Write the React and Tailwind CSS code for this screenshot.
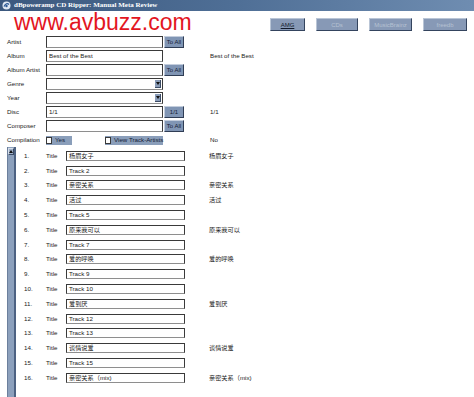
import React from 'react'

const ui = { fontFamily: '"Liberation Sans", Arial, "Noto Sans CJK SC", sans-serif' }

const tracks = [
  ['杨眉女子', '杨眉女子'],
  ['Track 2', ''],
  ['亲密关系', '亲密关系'],
  ['活过', '活过'],
  ['Track 5', ''],
  ['原来我可以', '原来我可以'],
  ['Track 7', ''],
  ['爱的呼唤', '爱的呼唤'],
  ['Track 9', ''],
  ['Track 10', ''],
  ['爱到厌', '爱到厌'],
  ['Track 12', ''],
  ['Track 13', ''],
  ['谈情说爱', '谈情说爱'],
  ['Track 15', ''],
  ['亲密关系（mix)', '亲密关系（mix)'],
]

function Field({ value = '', select = false, className = 'h-[12px]' }) {
  return (
    <div className={`relative w-full ${className} bg-white border border-[#3a3a3a] border-b-[#8e8e8e] flex items-center pl-[2px] text-[6.2px] text-[#1a1a1a] leading-none whitespace-nowrap`}>
      {value}
      {select && (
        <div className="absolute right-[1px] top-[1px] bottom-[1px] w-[6px] bg-[#8a9cb8] border-r border-b border-[#3c4c66] flex items-center justify-center">
          <div className="w-0 h-0 border-l-[2px] border-r-[2px] border-t-[3px] border-l-transparent border-r-transparent border-t-[#111]" />
        </div>
      )}
    </div>
  )
}

function SmallBtn({ children }) {
  return (
    <div className="ml-[1px] w-[20px] h-[12px] bg-[#8095b4] border border-t-[#c4cedd] border-l-[#c4cedd] border-r-[#2f3d55] border-b-[#2f3d55] flex items-center justify-center text-[6px] text-[#142035] leading-none">
      {children}
    </div>
  )
}

function TopBtn({ label, w, disabled }) {
  return (
    <div className={`${w} h-[13px] bg-[#8799b6] border border-t-[#b9c5d6] border-l-[#b9c5d6] border-r-[#34445e] border-b-[#34445e] flex items-center justify-center text-[6px] leading-none ${disabled ? 'text-[#b6c2d3]' : 'text-[#111a2a] underline'}`}>
      {label}
    </div>
  )
}

export default function App() {
  const rows = [
    ['Artist', '', 'To All', ''],
    ['Album', 'Best of the Best', null, 'Best of the Best'],
    ['Album Artist', '', 'To All', ''],
    ['Genre', '', null, '', true],
    ['Year', '', null, '', true],
    ['Disc', '1/1', '1/1', '1/1'],
    ['Composer', '', 'To All', ''],
  ]

  return (
    <div className="w-[474px] h-[397px] overflow-hidden bg-white flex flex-col text-[#1a1a1a]" style={ui}>
      {/* window title */}
      <div className="h-[11px] shrink-0 flex items-center pl-[2px] bg-gradient-to-r from-[#3b587e] via-[#4f6f96] to-[#6f8db1]">
        <svg width="9" height="9" viewBox="0 0 9 9">
          <circle cx="4.5" cy="4.5" r="4" fill="#dfe8f3" />
          <path d="M2 5.5 Q4.5 1 7 3.5" stroke="#2d5a96" strokeWidth="1.3" fill="none" />
          <circle cx="4.5" cy="5" r="1.2" fill="#2d5a96" />
        </svg>
        <span className="ml-[3px] text-[7px] font-bold text-white leading-none whitespace-nowrap" style={{ fontFamily: '"Liberation Serif", "Times New Roman", serif' }}>
          dBpoweramp CD Ripper: Manual Meta Review
        </span>
      </div>

      {/* watermark + source buttons */}
      <div className="h-[24px] shrink-0 flex items-start">
        <div className="ml-[14px] text-[23px] leading-[23px] text-[#e3161f]" style={{ fontFamily: '"Liberation Sans", Arial, sans-serif' }}>
          www.avbuzz.com
        </div>
        <div className="ml-auto mr-[7px] mt-[7px] flex gap-[11px]">
          <TopBtn label="AMG" w="w-[35px]" />
          <TopBtn label="CDs" w="w-[42px]" disabled />
          <TopBtn label="MusicBrainz" w="w-[43px]" disabled />
          <TopBtn label="freedb" w="w-[44px]" disabled />
        </div>
      </div>

      {/* album fields */}
      <div className="pl-[7px] shrink-0">
        {rows.map(([label, value, btn, right, select]) => (
          <div key={label} className="grid grid-cols-[39px_117px_47px_1fr] h-[14px] items-center text-[6.2px] leading-none whitespace-nowrap">
            <div>{label}</div>
            <Field value={value} select={select} />
            <div className="flex">{btn && <SmallBtn>{btn}</SmallBtn>}</div>
            <div>{right}</div>
          </div>
        ))}
        <div className="grid grid-cols-[39px_117px_47px_1fr] h-[14px] items-center text-[6.2px] leading-none whitespace-nowrap">
          <div>Compilation</div>
          <div className="flex justify-between">
            <div className="w-[26px] h-[9px] bg-[#8a9eba] flex items-center gap-[3px] text-[#142035]">
              <div className="w-[6px] h-[7px] bg-white border border-[#3a3a3a]" />
              Yes
            </div>
            <div className="w-[58px] h-[9px] bg-[#8a9eba] flex items-center gap-[3px] text-[#142035]">
              <div className="w-[6px] h-[7px] shrink-0 bg-white border border-[#3a3a3a]" />
              View Track-Artists
            </div>
          </div>
          <div />
          <div>No</div>
        </div>
      </div>

      {/* track list */}
      <div className="flex-1 flex min-h-0">
        <div className="ml-[7px] w-[9px] bg-[#8ca0bc] border-l border-[#6c7f9c] border-r-2 border-r-[#4d6282] flex flex-col items-center pt-[1px]">
          <div className="w-[6px] h-[7px] bg-[#9fb0c8] border border-t-[#d6dde8] border-l-[#d6dde8] border-r-[#3c4c66] border-b-[#3c4c66] flex items-center justify-center">
            <div className="w-0 h-0 border-l-[2px] border-r-[2px] border-b-[3px] border-l-transparent border-r-transparent border-b-[#111]" />
          </div>
        </div>
        <div className="pt-[1.5px] flex flex-col">
          {tracks.map(([title, right], i) => (
            <div key={i} className="h-[14.8px] flex items-center text-[6.2px] leading-none whitespace-nowrap">
              <div className="ml-[8px] w-[22px]">{i + 1}.</div>
              <div className="w-[20px]">Title</div>
              <div className="w-[119px]">
                <Field value={title} className="h-[10px]" />
              </div>
              <div className="ml-[24px]">{right}</div>
            </div>
          ))}
        </div>
      </div>
    </div>
  )
}
